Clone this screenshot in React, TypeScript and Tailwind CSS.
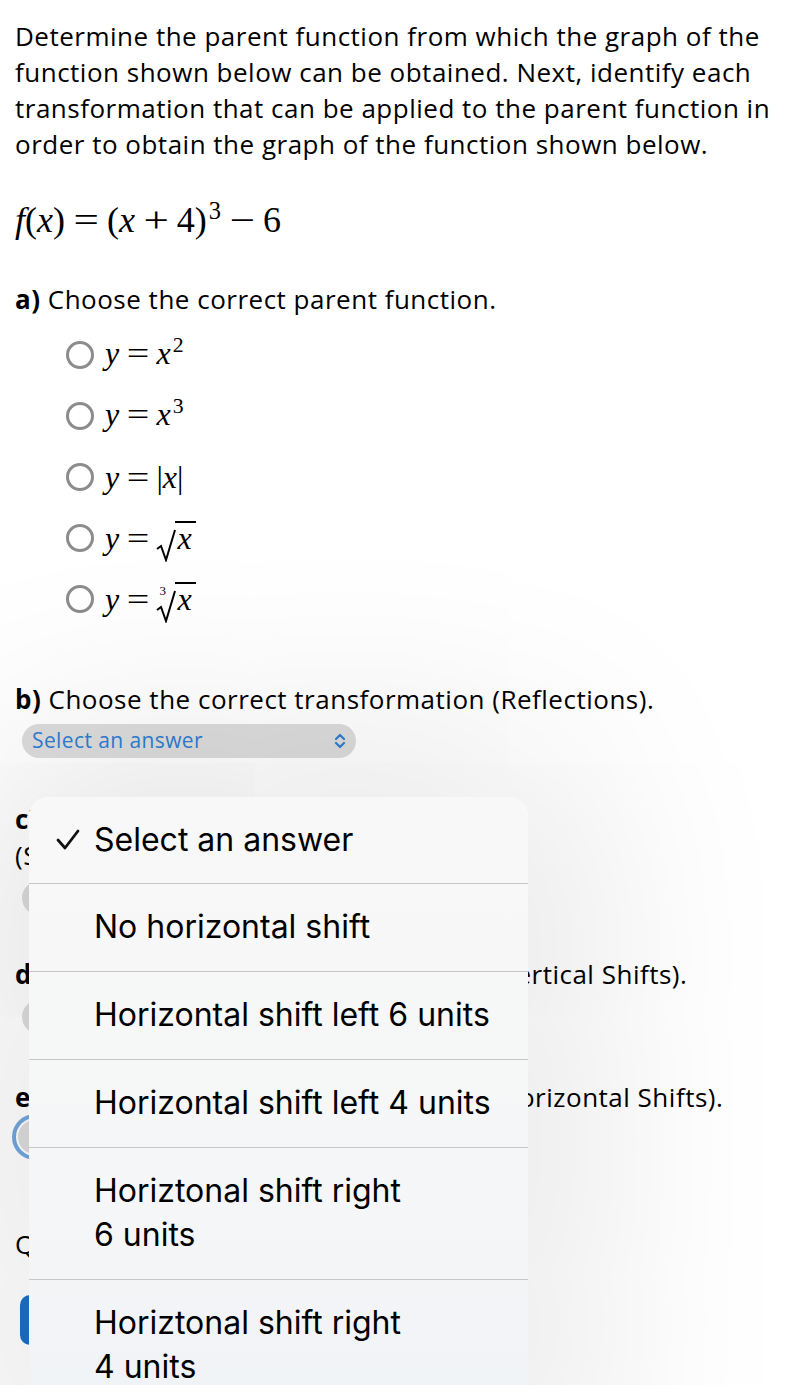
import React from 'react';

const PAGE_FONT = { fontFamily: '"Open Sans", Lato, sans-serif' };
const MATH_FONT = { fontFamily: '"Liberation Serif", "DejaVu Serif", serif' };
const MENU_FONT = { fontFamily: 'Inter, Roboto, sans-serif' };

const OPTIONS: string[][] = [
  ['No horizontal shift'],
  ['Horizontal shift left 6 units'],
  ['Horizontal shift left 4 units'],
  ['Horiztonal shift right', '6 units'],
  ['Horiztonal shift right', '4 units'],
];

const Radio = () => (
  <span className="inline-block h-[28px] w-[28px] shrink-0 rounded-full border-[3px] border-[#8c8c8c] bg-white" />
);

const V = ({ children }: { children: React.ReactNode }) => <i className="italic">{children}</i>;
const Op = ({ children }: { children: React.ReactNode }) => (
  <span className="mx-[0.3em] inline-block scale-x-125">{children}</span>
);
const Sup = ({ children }: { children: React.ReactNode }) => (
  <span className="relative top-[-0.55em] ml-[2px] text-[0.68em]">{children}</span>
);

const Radical = ({ index }: { index?: string }) => (
  <span className="relative inline-block pl-[19px]">
    {index && <span className="absolute left-[3px] top-[5px] text-[13px] leading-none">{index}</span>}
    <svg
      width="20"
      height="33"
      viewBox="0 0 20 33"
      fill="none"
      stroke="#000"
      strokeWidth="2"
      className="absolute bottom-[-4px] left-0"
    >
      <polyline points="1,20 5,17 10,31 19,1" />
    </svg>
    <span className="inline-block border-t-2 border-black pl-[2px] pr-[4px] leading-[31px]">
      <V>x</V>
    </span>
  </span>
);

const SelectPill = ({ label }: { label?: string }) => (
  <div className="flex h-[34px] w-[334px] items-center justify-between rounded-full bg-[#dcdcdc] pl-[10px] pr-[10px]">
    <span className="text-[21px] tracking-[0.4px] text-[#2f7dd1]">{label}</span>
    <svg width="12" height="16" viewBox="0 0 12 16" fill="none" stroke="#2f7dd1" strokeWidth="2.2" strokeLinecap="round" strokeLinejoin="round">
      <polyline points="2,6 6,2 10,6" />
      <polyline points="2,10 6,14 10,10" />
    </svg>
  </div>
);

const Label = ({ className = '', children }: { className?: string; children: React.ReactNode }) => (
  <p className={`text-[26px] leading-[36px] tracking-[0.5px] ${className}`}>{children}</p>
);

export default function App() {
  const parents: React.ReactNode[] = [
    <>
      <V>y</V>
      <Op>=</Op>
      <V>x</V>
      <Sup>2</Sup>
    </>,
    <>
      <V>y</V>
      <Op>=</Op>
      <V>x</V>
      <Sup>3</Sup>
    </>,
    <>
      <V>y</V>
      <Op>=</Op>|<V>x</V>|
    </>,
    <>
      <V>y</V>
      <Op>=</Op>
      <Radical />
    </>,
    <>
      <V>y</V>
      <Op>=</Op>
      <Radical index="3" />
    </>,
  ];

  return (
    <div className="relative min-h-[1385px] w-[798px] overflow-hidden bg-white text-black" style={PAGE_FONT}>
      <div className="px-[15px] pt-[18px]">
        <Label>
          Determine the parent function from which the graph of the function shown below can be obtained. Next,
          identify each transformation that can be applied to the parent function in order to obtain the graph of the
          function shown below.
        </Label>

        <div className="mt-[36px] text-[36px] leading-[44px]" style={MATH_FONT}>
          <V>f</V>(<V>x</V>)<Op>=</Op>(<V>x</V>
          <Op>+</Op>4)
          <Sup>3</Sup>
          <Op>−</Op>6
        </div>

        <Label className="mt-[35px]">
          <b className="font-bold">a)</b> Choose the correct parent function.
        </Label>

        <div className="ml-[51px] mt-[7px] flex flex-col">
          {parents.map((p, i) => (
            <div key={i} className="flex h-[61px] items-center gap-[11px]">
              <Radio />
              <span className="text-[32px] leading-[40px]" style={MATH_FONT}>
                {p}
              </span>
            </div>
          ))}
        </div>

        <Label className="mt-[52px]">
          <b className="font-bold">b)</b> Choose the correct transformation (Reflections).
        </Label>
        <div className="ml-[7px] mt-[7px]">
          <SelectPill label="Select an answer" />
        </div>

        <Label className="mt-[43px]">
          <b className="font-bold">c)</b> Choose the correct transformation
          <br />
          (Stretches/Compressions).
        </Label>
        <div className="ml-[7px] mt-[8px]">
          <SelectPill />
        </div>

        <Label className="mt-[41px]">
          <b className="font-bold">d)</b> Choose the correct transformation (Vertical Shifts).
        </Label>
        <div className="ml-[7px] mt-[8px]">
          <SelectPill />
        </div>

        <Label className="mt-[45px]">
          <b className="font-bold">e)</b> Choose the correct transformation (Horizontal Shifts).
        </Label>
        <div className="ml-[3px] mt-[5px] w-fit rounded-full outline-[4px] outline-offset-[2px] outline-[#72a7df] outline-solid">
          <SelectPill />
        </div>

        <Label className="mt-[72px]">Question Help:</Label>
        <button className="ml-[5px] mt-[33px] h-[50px] w-[230px] rounded-[10px] bg-[#1c6ec7] text-[22px] text-white">
          Submit Question
        </button>
      </div>

      {/* open select menu */}
      <div
        className="absolute left-[29px] top-[797px] w-[499px] rounded-t-[20px] bg-[linear-gradient(to_bottom,#f8f8f8,#f5f6f7_65%,#eef1f6)] pb-[40px] text-[32px] leading-[44px] shadow-[0_0_220px_50px_rgba(0,0,0,0.11)]"
        style={MENU_FONT}
      >
        <div className="flex items-center pb-[21px] pt-[21px] pl-[26px]">
          <svg width="26" height="24" viewBox="0 0 26 24" fill="none" stroke="#111" strokeWidth="2.8" strokeLinecap="round" strokeLinejoin="round" className="mr-[13px]">
            <polyline points="3,12 10,20 23,3" />
          </svg>
          <span>Select an answer</span>
        </div>
        {OPTIONS.map((lines, i) => (
          <div key={i} className="border-t border-[#c6c6c6] pb-[22px] pt-[21px] pl-[65px]">
            {lines.map((l) => (
              <div key={l}>{l}</div>
            ))}
          </div>
        ))}
      </div>
    </div>
  );
}
